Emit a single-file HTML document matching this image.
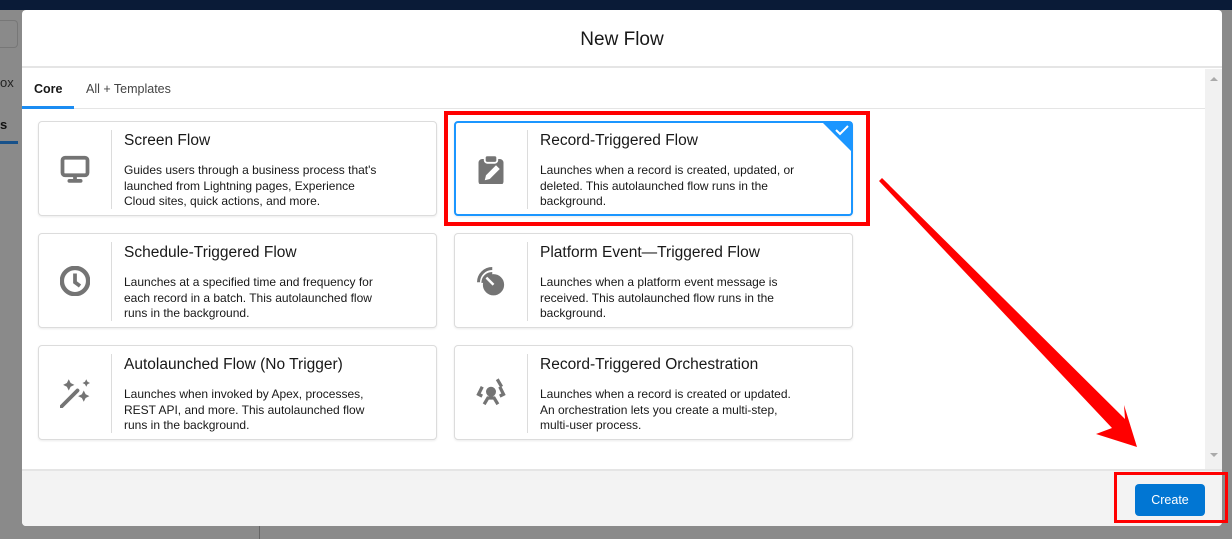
<!DOCTYPE html>
<html><head><style>
*{margin:0;padding:0;box-sizing:border-box}
body{width:1232px;height:539px;overflow:hidden;background:#8a8a8a;font-family:"Liberation Sans",sans-serif;position:relative}
.top{position:absolute;left:0;top:0;width:1232px;height:10px;background:#0a1b37}
.modal{position:absolute;left:22px;top:10px;width:1200px;height:516px;background:#fff;border-radius:4px;overflow:hidden}
.hdr{height:58px;border-bottom:2px solid #e5e5e5;text-align:center;font-size:19px;color:#181818;line-height:60px}
.tabs{position:absolute;top:59px;left:0;width:1183px;height:40px;border-bottom:1px solid #e5e5e5;font-size:12.5px}
.tabs span{position:absolute;top:13px}
.ul{position:absolute;left:0;top:37px;width:52px;height:3px;background:#1b8cf2}
.sb{position:absolute;left:1183px;top:59px;width:17px;height:400px;background:#f1f1f1}
.foot{position:absolute;left:0;top:459px;width:1200px;height:57px;background:#f3f3f3;border-top:2px solid #e5e5e5}
.btn{position:absolute;left:1113px;top:13px;width:70px;height:32px;background:#0176d3;border-radius:4px;color:#fff;font-size:12.5px;text-align:center;line-height:32px}
.card{position:absolute;width:399px;height:95px;border:1px solid #dcdcdc;border-radius:4px;background:#fff;box-shadow:0 1px 2px rgba(0,0,0,.08)}
.card .ic{position:absolute;left:21px;top:32px;width:30px;height:30px}
.card .dv{position:absolute;left:72px;top:8px;width:1px;height:79px;background:#dcdcdc}
.card h3{position:absolute;left:85px;top:10px;font-size:15.5px;font-weight:normal;color:#181818}
.card p{position:absolute;left:85px;top:41px;width:262px;font-size:12px;line-height:15.5px;color:#181818}
.sel{border:2px solid #1b96ff}
.sel .ic{left:20px;top:31px}.sel .dv{left:71px;top:7px}.sel h3{left:84px;top:9px}.sel p{left:84px;top:40px}
</style></head><body>
<div class="top"></div>
<div style="position:absolute;left:0;top:20px;width:18px;height:28px;border:1px solid #777;border-left:none;border-radius:0 4px 4px 0"></div>
<div style="position:absolute;left:0;top:75px;font-size:13px;color:#222">ox</div>
<div style="position:absolute;left:0;top:117px;font-size:13px;font-weight:bold;color:#111">s</div>
<div style="position:absolute;left:0;top:141px;width:18px;height:3px;background:#17518a"></div>
<div style="position:absolute;left:259px;top:526px;width:1px;height:13px;background:#666"></div>
<div class="modal">
<div class="hdr">New Flow</div>
<div class="tabs"><span style="left:12px;font-weight:bold;color:#181818">Core</span><span style="left:64px;color:#444">All + Templates</span><div class="ul"></div></div>
<div class="sb"><div style="position:absolute;left:5px;top:8px;border:4px solid transparent;border-bottom:4px solid #aaa;border-top:none"></div><div style="position:absolute;left:5px;top:384px;border:4px solid transparent;border-top:4px solid #aaa;border-bottom:none"></div></div>
<div class="foot"><div class="btn">Create</div></div>
</div>

<div class="card" style="left:38px;top:121px"><svg class="ic" viewBox="4 4 24 24"><rect x="6" y="7" width="20" height="14" rx="2" fill="none" stroke="#747474" stroke-width="3"/><rect x="14.5" y="21" width="3" height="4" fill="#747474"/><rect x="10" y="24" width="12" height="3" rx="1.5" fill="#747474"/></svg><div class="dv"></div><h3>Screen Flow</h3><p>Guides users through a business process that's launched from Lightning pages, Experience Cloud sites, quick actions, and more.</p></div>

<div class="card sel" style="left:454px;top:121px"><svg class="ic" viewBox="4 4 24 24"><rect x="6" y="8" width="20" height="21" rx="3" fill="#747474"/><rect x="11" y="5" width="10" height="6" rx="2" fill="#747474" stroke="#fff" stroke-width="1.5"/><path d="M11 25l1-4 8-8 3 3-8 8z" fill="#fff"/></svg><div class="dv"></div><h3>Record-Triggered Flow</h3><p>Launches when a record is created, updated, or deleted. This autolaunched flow runs in the background.</p>
<svg style="position:absolute;right:-1px;top:-1px" width="30" height="30" viewBox="0 0 30 30"><path d="M0 0H30V30Z" fill="#1b96ff"/><path d="M14 8l4 4 8-8" fill="none" stroke="#fff" stroke-width="2"/></svg></div>

<div class="card" style="left:38px;top:233px"><svg class="ic" viewBox="4 4 24 24"><circle cx="16" cy="16" r="10.5" fill="none" stroke="#747474" stroke-width="3.5"/><path d="M16 10v7l4 3" fill="none" stroke="#747474" stroke-width="3"/></svg><div class="dv"></div><h3>Schedule-Triggered Flow</h3><p>Launches at a specified time and frequency for each record in a batch. This autolaunched flow runs in the background.</p></div>

<div class="card" style="left:454px;top:233px"><svg class="ic" viewBox="4 4 24 24"><circle cx="18" cy="19" r="8.5" fill="#747474"/><path d="M18 19L12 13" stroke="#fff" stroke-width="2"/><path d="M6 17a11 11 0 0 1 11-11M9.5 17.5a7.5 7.5 0 0 1 7.5-7.5" fill="none" stroke="#747474" stroke-width="2.4"/></svg><div class="dv"></div><h3>Platform Event—Triggered Flow</h3><p>Launches when a platform event message is received. This autolaunched flow runs in the background.</p></div>

<div class="card" style="left:38px;top:345px"><svg class="ic" viewBox="4 4 24 24"><path d="M5 27L18 14" stroke="#747474" stroke-width="3" stroke-linecap="round"/><path d="M11 5l1.5 3 3 1.5-3 1.5-1.5 3-1.5-3-3-1.5 3-1.5zM23 14l1.5 3 3 1.5-3 1.5-1.5 3-1.5-3-3-1.5 3-1.5zM25 5l1 2 2 1-2 1-1 2-1-2-2-1 2-1z" fill="#747474"/></svg><div class="dv"></div><h3>Autolaunched Flow (No Trigger)</h3><p>Launches when invoked by Apex, processes, REST API, and more. This autolaunched flow runs in the background.</p></div>

<div class="card" style="left:454px;top:345px"><svg class="ic" viewBox="4 4 24 24"><circle cx="16" cy="15" r="4" fill="#747474"/><path d="M9 11l-3 6 3 1.5M23 11l3 6-3 1.5M10.5 25l3-5h5l3 5M21 5l3.5 6" fill="none" stroke="#747474" stroke-width="2.6"/></svg><div class="dv"></div><h3>Record-Triggered Orchestration</h3><p>Launches when a record is created or updated. An orchestration lets you create a multi-step, multi-user process.</p></div>

<div style="position:absolute;left:444px;top:111px;width:426px;height:115px;border:4px solid #f00"></div>
<div style="position:absolute;left:1114px;top:472px;width:114px;height:51px;border:3px solid #f00"></div>
<svg style="position:absolute;left:0;top:0" width="1232" height="539"><path d="M879 181 L882 178 L1125 419 L1124 405 L1137 447 L1096 434 L1112 428 Z" fill="#f00"/></svg>
</body></html>
